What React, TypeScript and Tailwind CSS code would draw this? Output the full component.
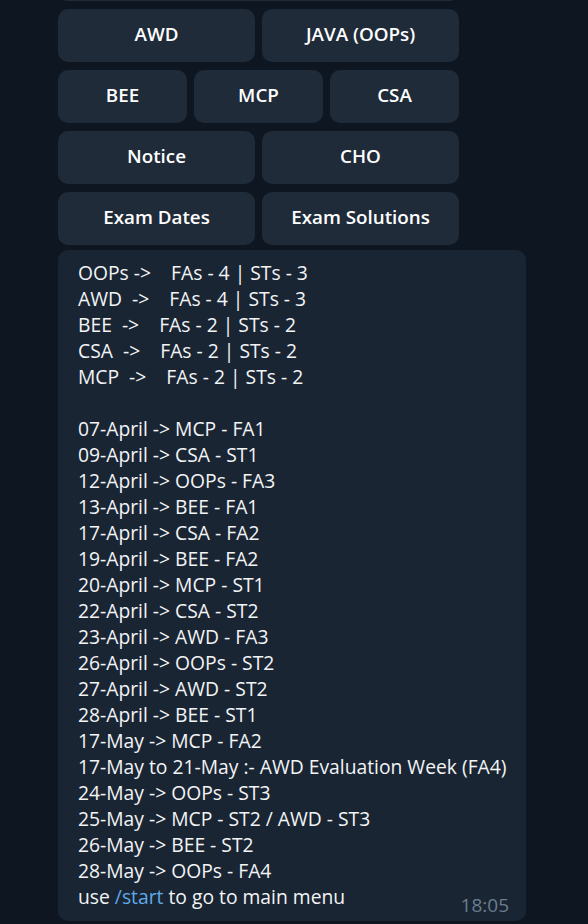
import React from 'react';

// Reply keyboard rows shown above the message (first row is scrolled out of view)
const keyboardRows: string[][] = [
  [''],
  ['AWD', 'JAVA (OOPs)'],
  ['BEE', 'MCP', 'CSA'],
  ['Notice', 'CHO'],
  ['Exam Dates', 'Exam Solutions'],
];

const summary = [
  'OOPs ->    FAs - 4 | STs - 3',
  'AWD  ->    FAs - 4 | STs - 3',
  'BEE  ->    FAs - 2 | STs - 2',
  'CSA  ->    FAs - 2 | STs - 2',
  'MCP  ->    FAs - 2 | STs - 2',
];

const dates = [
  '07-April -> MCP - FA1',
  '09-April -> CSA - ST1',
  '12-April -> OOPs - FA3',
  '13-April -> BEE - FA1',
  '17-April -> CSA - FA2',
  '19-April -> BEE - FA2',
  '20-April -> MCP - ST1',
  '22-April -> CSA - ST2',
  '23-April -> AWD - FA3',
  '26-April -> OOPs - ST2',
  '27-April -> AWD - ST2',
  '28-April -> BEE - ST1',
  '17-May -> MCP - FA2',
  '17-May to 21-May :- AWD Evaluation Week (FA4)',
  '24-May -> OOPs - ST3',
  '25-May -> MCP - ST2 / AWD - ST3',
  '26-May -> BEE - ST2',
  '28-May -> OOPs - FA4',
];

const KeyButton = ({ label }: { label: string }) => (
  <button className="flex-1 h-[53px] rounded-[10px] bg-[#1f2b39] text-white text-[18.8px] font-semibold pb-[2px]">
    {label}
  </button>
);

export default function App() {
  return (
    <div
      className="w-[588px] h-[924px] overflow-hidden bg-[#0e1621]"
      style={{ fontFamily: '"Open Sans", "Noto Sans", sans-serif' }}
    >
      <div className="-mt-[52px] pl-[58px] flex flex-col">
        <div className="w-[401px] flex flex-col gap-[8px]">
          {keyboardRows.map((row, i) => (
            <div key={i} className="flex gap-[7px]">
              {row.map((label, j) => (
                <KeyButton key={j} label={label} />
              ))}
            </div>
          ))}
        </div>

        {/* Message bubble */}
        <div className="mt-[5px] w-[468px] rounded-[10px] bg-[#1a2533] pl-[20px] pr-[17px] pt-[10px] pb-[11px] text-[19.3px] leading-[26px] text-[#f2f4f6]">
          {summary.map((line) => (
            <div key={line} className="whitespace-pre">
              {line}
            </div>
          ))}
          <div className="h-[26px]" />
          {dates.map((line) => (
            <div key={line} className="whitespace-pre">
              {line}
            </div>
          ))}
          <div className="flex items-end justify-between">
            <span>
              use <span className="text-[#5fa9e6]">/start</span> to go to main menu
            </span>
            <span className="text-[#6b7d8f] text-[19px] leading-[22px] -mb-[6px]">18:05</span>
          </div>
        </div>
      </div>
    </div>
  );
}
